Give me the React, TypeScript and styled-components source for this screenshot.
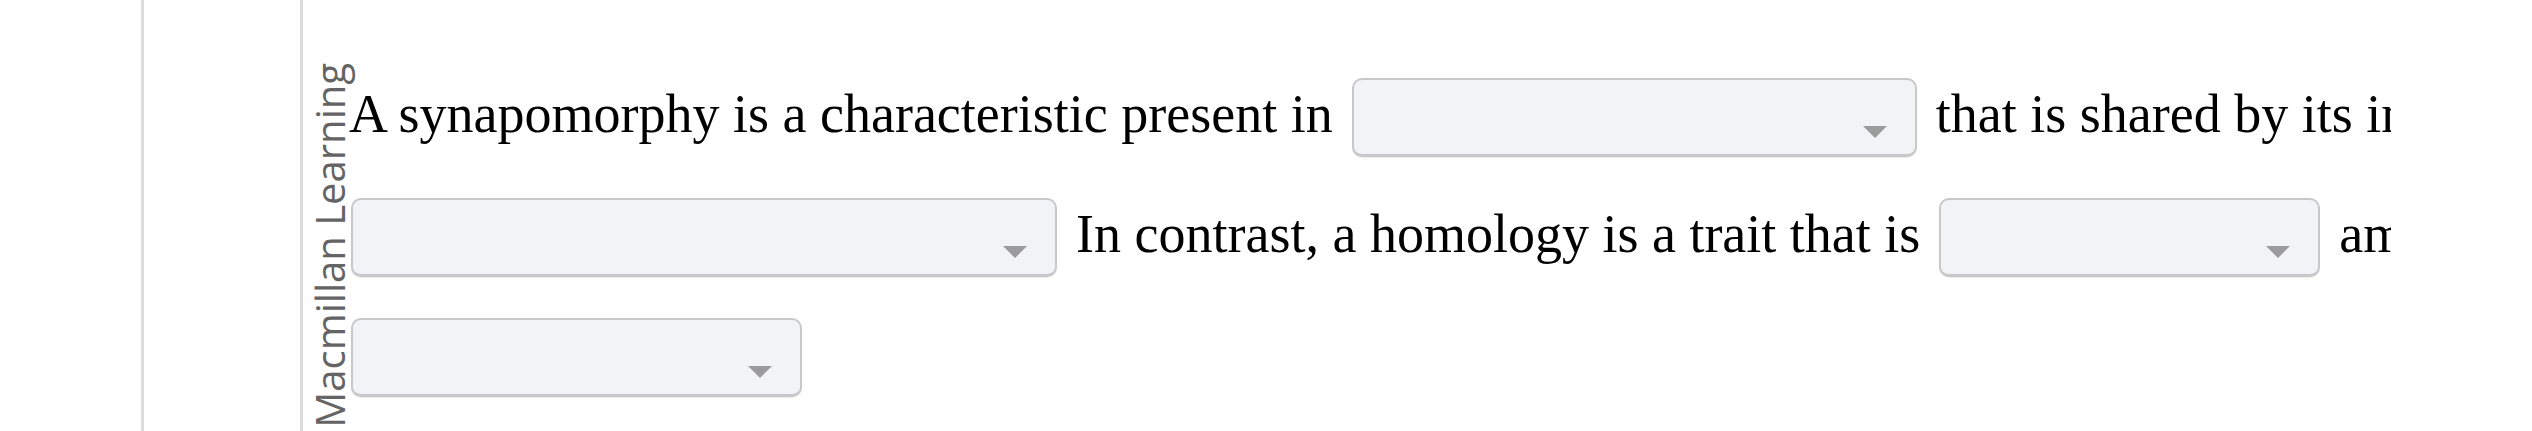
import React from 'react';
import styled, { createGlobalStyle } from 'styled-components';

const GlobalStyle = createGlobalStyle`
  html, body {
    margin: 0;
    padding: 0;
    background: #ffffff;
  }
`;

interface SelectProps {
  width: number;
  lead?: boolean;
}

function Select({ width, lead }: SelectProps) {
  return (
    <Dropdown $width={width} $lead={lead} role="combobox" aria-expanded={false}>
      <Caret />
    </Dropdown>
  );
}

function App() {
  return (
    <>
      <GlobalStyle />
      <Page>
        <Gutter />
        <Rail />
        <Main>
          <Watermark>Macmillan Learning</Watermark>
          <Question>
            <Line>
              <Text>A synapomorphy is a characteristic present in</Text>
              <Select width={565} />
              <Text>that is shared by its immediate descendants</Text>
            </Line>
            <Line>
              <Select width={706} lead />
              <Text>In contrast, a homology is a trait that is</Text>
              <Select width={381} />
              <Text>among</Text>
            </Line>
            <Line>
              <Select width={451} lead />
            </Line>
          </Question>
        </Main>
      </Page>
    </>
  );
}

export default App;

const Page = styled.div`
  display: flex;
  height: 431px;
  overflow: hidden;
`;

const Gutter = styled.div`
  width: 141px;
  flex-shrink: 0;
`;

const Rail = styled.div`
  width: 156px;
  flex-shrink: 0;
  border-left: 3px solid #dcdcdc;
  border-right: 3px solid #dcdcdc;
`;

const Main = styled.div`
  position: relative;
  flex: 1;
  padding: 57px 0 0 46px;
`;

const Watermark = styled.div`
  position: absolute;
  left: 7px;
  top: 63px;
  writing-mode: vertical-rl;
  transform: rotate(180deg);
  font-family: 'Open Sans', sans-serif;
  font-size: 40px;
  line-height: 40px;
  color: #646464;
  white-space: nowrap;
`;

const Question = styled.div`
  width: 2042px;
  overflow: hidden;
`;

const Line = styled.div`
  display: flex;
  align-items: center;
  gap: 19px;
  height: 120px;
  white-space: nowrap;
`;

const Text = styled.span`
  font-family: 'Liberation Serif', 'Times New Roman', serif;
  font-size: 54px;
  line-height: 1;
  color: #000000;
  margin-bottom: 7px;
  flex-shrink: 0;
`;

const Dropdown = styled.div<{ $width: number; $lead?: boolean }>`
  box-sizing: border-box;
  display: flex;
  justify-content: flex-end;
  align-items: flex-end;
  flex-shrink: 0;
  width: ${({ $width }) => $width}px;
  height: 79px;
  padding: 0 28px 16px 0;
  margin-left: ${({ $lead }) => ($lead ? '2px' : '0')};
  background: #f2f3f6;
  border: 2px solid #c8c8c8;
  border-bottom-width: 3px;
  border-radius: 10px;
  box-shadow: 0 1px 1px rgba(0, 0, 0, 0.08);
`;

const Caret = styled.span`
  width: 0;
  height: 0;
  border-left: 12px solid transparent;
  border-right: 12px solid transparent;
  border-top: 12px solid #9b9b9b;
`;
